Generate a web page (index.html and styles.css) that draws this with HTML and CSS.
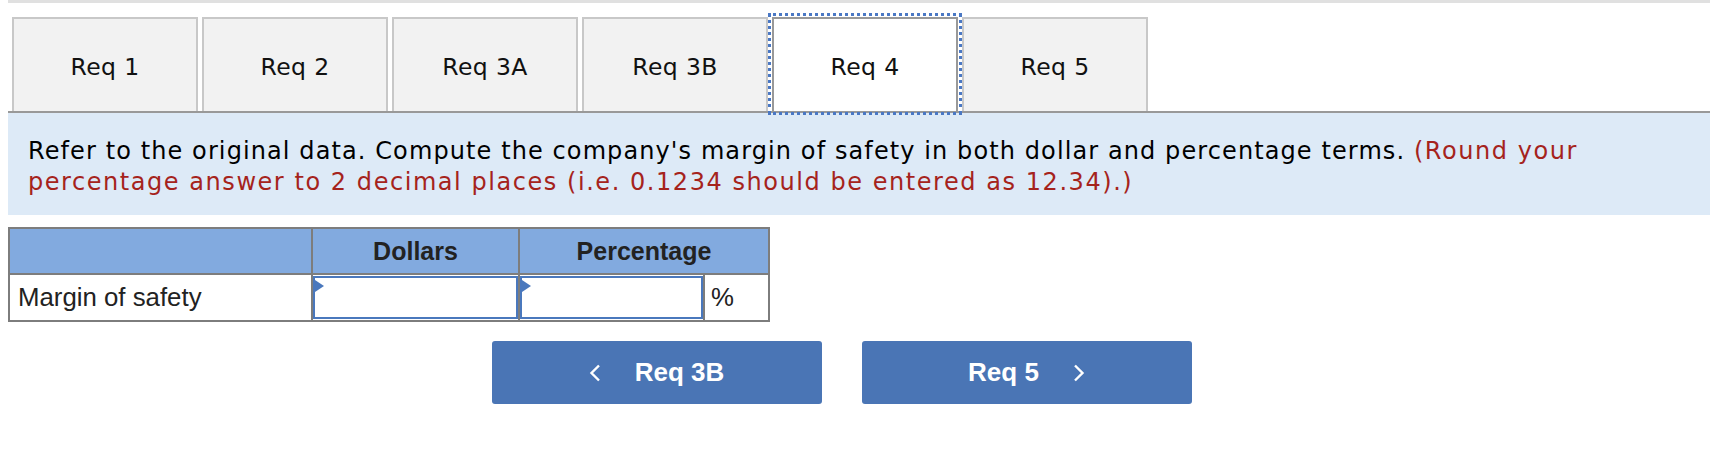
FILE: index.html
```html
<!DOCTYPE html>
<html lang="en">
<head>
  <meta charset="UTF-8">
  <title>Req 4</title>
  <link rel="stylesheet" href="styles.css">
</head>
<body>
  <div class="top-bar"></div>

  <div class="tabs">
    <div class="tab">Req 1</div>
    <div class="tab">Req 2</div>
    <div class="tab">Req 3A</div>
    <div class="tab">Req 3B</div>
    <div class="tab active">Req 4</div>
    <div class="tab">Req 5</div>
  </div>

  <div class="question">
    Refer to the original data. Compute the company's margin of safety in both dollar and percentage terms.
    <span class="hint">(Round your percentage answer to 2 decimal places (i.e. 0.1234 should be entered as 12.34).)</span>
  </div>

  <table class="answer">
    <tr class="head">
      <th class="label-col"></th>
      <th class="dollar-col">Dollars</th>
      <th colspan="2">Percentage</th>
    </tr>
    <tr>
      <td class="label">Margin of safety</td>
      <td class="input-cell"><div class="field"></div></td>
      <td class="input-cell pct-input"><div class="field"></div></td>
      <td class="unit">%</td>
    </tr>
  </table>

  <div class="nav">
    <button class="nav-btn">
      <svg width="12" height="18" viewBox="0 0 12 18"><polyline points="10,1.5 2.5,9 10,16.5" fill="none" stroke="#fff" stroke-width="2.4"/></svg>
      <span>Req 3B</span>
    </button>
    <button class="nav-btn">
      <span>Req 5</span>
      <svg width="12" height="18" viewBox="0 0 12 18"><polyline points="2,1.5 9.5,9 2,16.5" fill="none" stroke="#fff" stroke-width="2.4"/></svg>
    </button>
  </div>
</body>
</html>
```

FILE: styles.css
```css
* {
  box-sizing: border-box;
}

body {
  margin: 0;
  padding-left: 8px;
  background: #fff;
  font-family: "DejaVu Sans", Verdana, sans-serif;
}

.top-bar {
  height: 3px;
  background-color: #e0e0e0;
}

.tabs {
  display: flex;
  gap: 4px;
  padding: 14px 0 0 4px;
  border-bottom: 2px solid #999;
}

.tab {
  width: 186px;
  height: 94px;
  padding-top: 3px;
  display: flex;
  align-items: center;
  justify-content: center;
  font-size: 23.5px;
  letter-spacing: 0.4px;
  color: #111;
  background-color: #f2f2f2;
  border: 2px solid #c8c8c8;
  border-bottom: none;
}

.tab.active {
  background-color: #fff;
  border-color: #999;
  outline: 3px dotted #4a78c4;
  outline-offset: 1px;
}

.question {
  background-color: #ddeaf7;
  padding: 23px 20px 17px;
  font-size: 24px;
  letter-spacing: 1.1px;
  line-height: 31px;
  color: #000;
}

.hint {
  color: #a5231c;
  letter-spacing: 1.55px;
}

.answer {
  margin-top: 12px;
  border-collapse: collapse;
  font-family: "Liberation Sans", Arial, sans-serif;
  font-size: 25px;
  color: #222;
}

.answer th,
.answer td {
  border: 2px solid #7d7d7d;
  padding: 0;
}

.head th {
  height: 46px;
  background-color: #82aadf;
  font-weight: bold;
  text-align: center;
}

.label-col {
  width: 303px;
}

.dollar-col {
  width: 207px;
}

.label {
  height: 47px;
  font-size: 25.8px;
  padding-left: 8px !important;
}

.input-cell {
  position: relative;
  width: 207px;
}

.pct-input {
  width: 185px;
}

.field {
  height: 43px;
  border: 2px solid #4a78bd;
  background: #fff;
}

.input-cell::before {
  content: "";
  position: absolute;
  left: 2px;
  top: 5px;
  border-top: 6px solid transparent;
  border-bottom: 6px solid transparent;
  border-left: 9px solid #4a78bd;
}

.unit {
  width: 65px;
  font-size: 25.8px;
  padding-left: 6px !important;
}

.nav {
  display: flex;
  justify-content: center;
  gap: 40px;
  margin-top: 19px;
  padding-right: 35px;
}

.nav-btn {
  width: 330px;
  height: 63px;
  display: flex;
  align-items: center;
  justify-content: center;
  gap: 34px;
  border: none;
  border-radius: 3px;
  background-color: #4a75b5;
  color: #fff;
  font-family: "Liberation Sans", Arial, sans-serif;
  font-size: 26px;
  font-weight: bold;
}
```
